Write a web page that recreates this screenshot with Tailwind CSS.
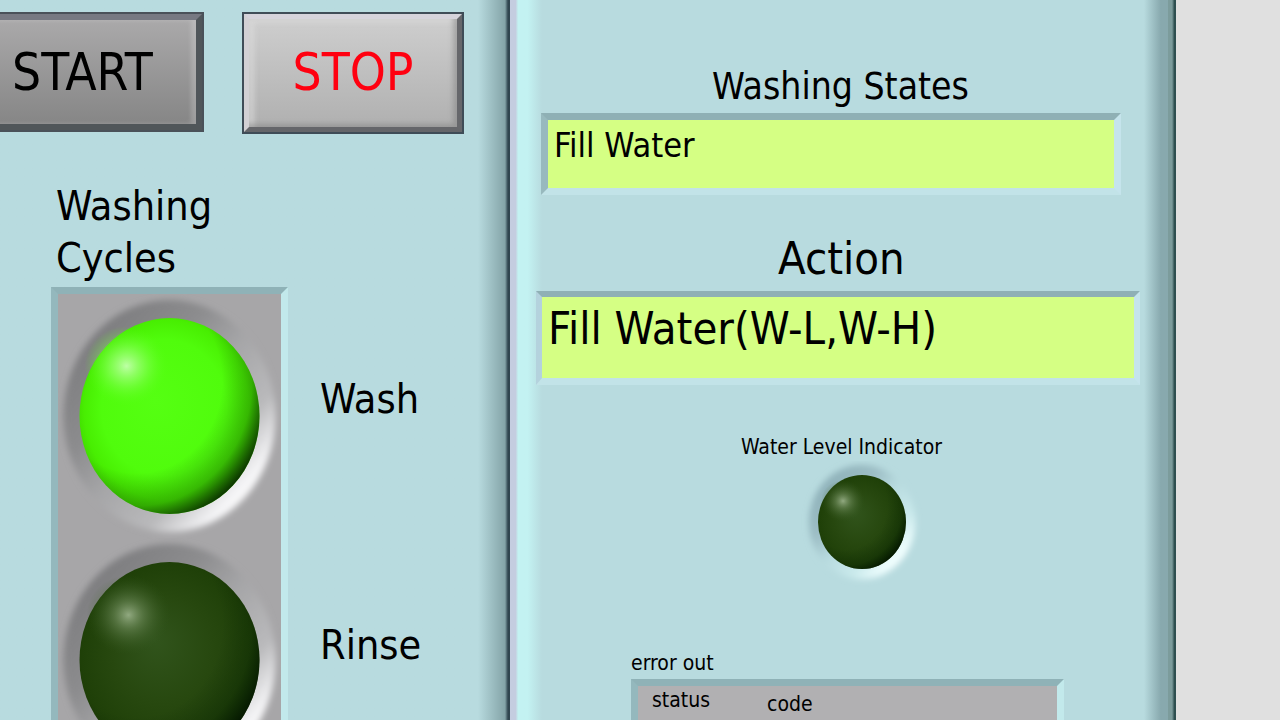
<!DOCTYPE html>
<html lang="en">
<head>
<meta charset="utf-8">
<meta name="viewport" content="width=device-width, initial-scale=1">
<title>Washing Machine</title>
<script src="https://cdn.jsdelivr.net/npm/@tailwindcss/browser@4"></script>
</head>
<body class="h-screen overflow-hidden bg-[#e0e0e0] font-['DejaVu_Sans_Condensed','DejaVu_Sans',sans-serif] text-black">
<svg class="absolute size-0" aria-hidden="true">
  <defs>
    <radialGradient id="on" cx="0.5" cy="0.48" r="0.56" fx="0.42" fy="0.42">
      <stop offset="0" stop-color="#55ff12"/><stop offset="0.62" stop-color="#50fc0c"/><stop offset="0.82" stop-color="#48ee02"/><stop offset="1" stop-color="#3cc800"/>
    </radialGradient>
    <radialGradient id="off" cx="0.5" cy="0.5" r="0.56" fx="0.42" fy="0.4">
      <stop offset="0" stop-color="#31541c"/><stop offset="0.5" stop-color="#27480f"/><stop offset="0.85" stop-color="#1f4008"/><stop offset="1" stop-color="#1a3604"/>
    </radialGradient>
    <radialGradient id="shade" cx="0.32" cy="0.32" r="0.76">
      <stop offset="0.62" stop-color="#001a00" stop-opacity="0"/><stop offset="0.84" stop-color="#001a00" stop-opacity="0.26"/><stop offset="1" stop-color="#001000" stop-opacity="0.85"/>
    </radialGradient>
    <radialGradient id="glowOn">
      <stop offset="0" stop-color="#c4ffae" stop-opacity="0.95"/><stop offset="0.4" stop-color="#98ff70" stop-opacity="0.6"/><stop offset="1" stop-color="#55ff12" stop-opacity="0"/>
    </radialGradient>
    <radialGradient id="glowOff">
      <stop offset="0" stop-color="#9db48d" stop-opacity="0.9"/><stop offset="0.35" stop-color="#6f8c5c" stop-opacity="0.6"/><stop offset="1" stop-color="#31541c" stop-opacity="0"/>
    </radialGradient>
    <linearGradient id="rimGray" x1="0.12" y1="0.12" x2="0.88" y2="0.88">
      <stop offset="0" stop-color="#7c7c7e"/><stop offset="0.3" stop-color="#8c8c8e"/><stop offset="0.5" stop-color="#a5a5a7"/><stop offset="0.75" stop-color="#b9b9bb"/><stop offset="0.92" stop-color="#f4f4f6"/><stop offset="1" stop-color="#ffffff"/>
    </linearGradient>
    <linearGradient id="rimBlue" x1="0.12" y1="0.12" x2="0.88" y2="0.88">
      <stop offset="0" stop-color="#8db0b8"/><stop offset="0.3" stop-color="#9dbec5"/><stop offset="0.5" stop-color="#b8dbdf"/><stop offset="0.75" stop-color="#caeaec"/><stop offset="0.92" stop-color="#f0ffff"/><stop offset="1" stop-color="#ffffff"/>
    </linearGradient>
    <filter id="soft" x="-10%" y="-10%" width="120%" height="120%"><feGaussianBlur stdDeviation="3"/></filter>
  </defs>
</svg>

<main class="grid h-full grid-cols-[510fr_666fr_104fr]">
  <section class="flex flex-col overflow-hidden bg-[#b8dbdf] bg-linear-to-l from-[#30454f] from-[2px] via-[#84a4a8] via-[5px] to-[#b8dbdf] to-[32px] pt-3">
    <div class="-ml-[38px] flex items-start gap-[38px]">
      <button type="button" class="h-[120px] w-[242px] shrink-0 border-2 border-[#4a5159] text-[51px]"><span class="flex h-full items-center border-t-[6px] border-r-[6px] border-b-[6px] border-t-[#777982] border-r-[#50565a] border-b-[#505659] bg-linear-to-b from-[#aaa9aa] to-[#868686] pt-0.5 pl-12 shadow-[inset_-5px_0_4px_#ffffff33]">START</span></button>
      <button type="button" class="h-[122px] w-[222px] shrink-0 border-2 border-[#3f4c57] text-[51px] text-[#ff0010]"><span class="flex h-full items-center justify-center border-5 border-t-[#d5d3db] border-r-[#66676b] border-b-[#65666a] border-l-[#d2d0d4] bg-linear-to-b from-[#cecece] to-[#b0b0b0] shadow-[inset_-4px_-3px_5px_#80808080,inset_6px_4px_4px_#dddddd80]">STOP</span></button>
    </div>
    <h2 class="mt-[46px] ml-14 w-44 text-[41px] leading-[52px]">Washing Cycles</h2>
    <div class="mt-[3px] ml-[51px] flex items-start gap-8">
      <div class="w-[237px] shrink-0 border-7 border-t-[#8fb2b7] border-r-[#c2e9eb] border-b-[#c2e9eb] border-l-[#94b8bd] bg-[#a7a6a8]">
        <svg role="img" aria-label="Wash on" class="block h-[244px] w-full" viewBox="-111 -122 222 244">
          <ellipse rx="106" ry="116" fill="url(#rimGray)" filter="url(#soft)"/>
          <ellipse rx="90" ry="98" fill="url(#on)"/><ellipse rx="90" ry="98" fill="url(#shade)"/>
          <ellipse cx="-43" cy="-50" rx="42" ry="40" fill="url(#glowOn)"/>
        </svg>
        <svg role="img" aria-label="Rinse off" class="block h-[244px] w-full" viewBox="-111 -122 222 244">
          <ellipse rx="106" ry="116" fill="url(#rimGray)" filter="url(#soft)"/>
          <ellipse rx="90" ry="98" fill="url(#off)"/><ellipse rx="90" ry="98" fill="url(#shade)"/>
          <ellipse cx="-41" cy="-45" rx="42" ry="40" fill="url(#glowOff)"/>
        </svg>
      </div>
      <ul class="text-[41px] leading-[52px]">
        <li class="h-[246px] pt-[86px]">Wash</li>
        <li class="h-[246px] pt-[86px]">Rinse</li>
      </ul>
    </div>
  </section>

  <section class="flex overflow-hidden bg-[#b8dbdf]">
    <div class="w-2 shrink-0 bg-linear-to-r from-[#c4cde0] from-70% to-[#c2f0f0]"></div>
    <div class="w-6 shrink-0 bg-linear-to-r from-[#c3f2f2] from-40% to-[#b8dbdf]"></div>
    <div class="-ml-1.5 flex min-w-0 flex-1 flex-col pt-16">
      <label for="state" class="ml-44 text-[37px] leading-[46px]">Washing States</label>
      <input id="state" readonly value="Fill Water" class="mt-[3px] ml-[5px] h-[82px] w-[580px] shrink-0 border-7 border-t-[#8fb0b5] border-r-[#c5e4ec] border-b-[#c2e3e8] border-l-[#98b9be] bg-[#d5ff84] px-1.5 pb-[19px] text-[34px] outline-none">
      <label for="action" class="mt-[34px] ml-[242px] text-[45px] leading-[60px]">Action</label>
      <input id="action" readonly value="Fill Water(W-L,W-H)" class="mt-[2px] h-[94px] w-[604px] shrink-0 border-6 border-b-7 border-t-[#8fb0b5] border-r-[#c5e4ec] border-b-[#c2e3e8] border-l-[#b4d2dd] bg-[#d5ff84] px-1.5 pb-[18px] text-[45px] outline-none">
      <div class="mt-12 ml-[205px] w-[210px]">
        <p class="text-[21px] leading-7 whitespace-nowrap">Water Level Indicator</p>
        <svg role="img" aria-label="Water level low" class="ml-[60px] block h-[132px] w-[122px]" viewBox="-61 -61 122 132">
          <ellipse rx="53" ry="57" fill="url(#rimBlue)" filter="url(#soft)"/>
          <ellipse rx="44" ry="47" fill="url(#off)"/><ellipse rx="44" ry="47" fill="url(#shade)"/>
          <ellipse cx="-19" cy="-21" rx="22" ry="21" fill="url(#glowOff)"/>
        </svg>
      </div>
      <h3 class="mt-[56px] ml-[95px] text-[21px] leading-7">error out</h3>
      <div class="mt-0.5 ml-[95px] flex h-60 w-[433px] shrink-0 gap-[57px] border-7 border-t-[#8fb2b7] border-r-[#c2e9eb] border-b-[#c2e9eb] border-l-[#94b8bd] bg-[#b1b0b2] pl-3.5 text-[21px] leading-7">
        <span>status</span><span class="pt-1">code</span>
      </div>
    </div>
    <div class="w-6 shrink-0 bg-linear-to-r from-[#b8dbdf] to-[#88a9ae] to-70%"></div>
    <div class="w-2 shrink-0 bg-linear-to-r from-[#7c9c9c] from-50% to-[#2e4f50] to-80%"></div>
  </section>
</main>
</body>
</html>
